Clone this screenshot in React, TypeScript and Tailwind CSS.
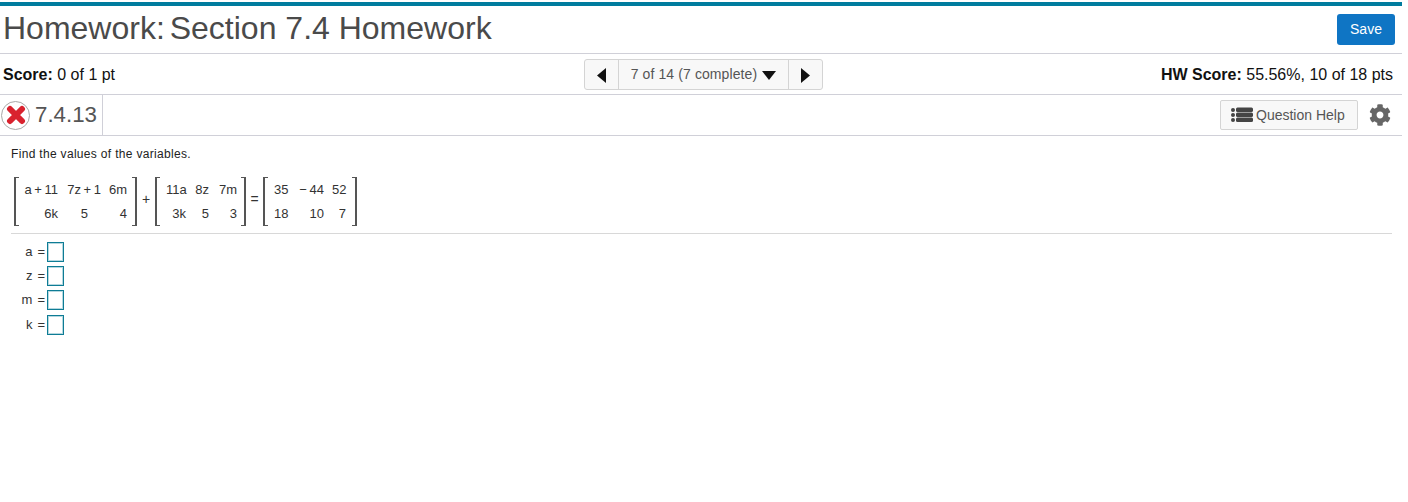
import { FaCog } from 'react-icons/fa'

function Bracket({ side }: { side: 'left' | 'right' }) {
  return (
    <div
      className={
        side === 'left'
          ? 'w-[5px] h-[49px] border-l-2 border-y border-[#555]'
          : 'w-[5px] h-[49px] border-r-2 border-y border-[#555]'
      }
    />
  )
}

function Matrix({ rows, gridClass }: { rows: string[][]; gridClass: string }) {
  return (
    <div className="flex items-center">
      <Bracket side="left" />
      <div className={gridClass}>
        {rows.flat().map((cell, i) => (
          <span key={i} className="text-right leading-[14px] whitespace-pre [word-spacing:-1px]">
            {cell}
          </span>
        ))}
      </div>
      <Bracket side="right" />
    </div>
  )
}

function Answer({ label }: { label: string }) {
  return (
    <div className="flex items-center justify-end w-[64px] h-[24px]">
      <span className="text-[13px] text-[#333]">{label}</span>
      <span className="text-[13px] text-[#333] ml-[5px] mr-[2px]">=</span>
      <div className="w-[17px] h-[20px] border border-[#0e7c95] shadow-[inset_0_0_0_1px_#b5d8e0]" />
    </div>
  )
}

function TriangleLeft() {
  return (
    <svg width="9" height="15" viewBox="0 0 9 15" className="mt-[1px]">
      <path d="M9 0V15L0 7.500Z" fill="#111" />
    </svg>
  )
}

function TriangleRight() {
  return (
    <svg width="9" height="15" viewBox="0 0 9 15" className="mt-[1px]">
      <path d="M0 0V15L9 7.500Z" fill="#111" />
    </svg>
  )
}

export default function App() {
  return (
    <div className="w-[1402px] h-[502px] bg-white font-['Liberation_Sans',Arial,sans-serif] overflow-hidden">
      <div className="mt-[2px] h-[4px] bg-[#007c9e]" />

      {/* title */}
      <div className="flex items-center justify-between h-[48px] border-b border-[#d0d0d8] pl-[3px] pr-[7px]">
        <h1 className="text-[32px] leading-none text-[#4a4a4a] mt-[-3px]">
          Homework:<span className="-ml-[4px]"> Section 7.4 Homework</span>
        </h1>
        <button className="w-[58px] h-[31px] bg-[#0f75c4] rounded-[3px] text-white text-[14px]">Save</button>
      </div>

      {/* score row */}
      <div className="relative flex items-center justify-between h-[41px] border-b border-[#d0d0d8] pt-[2px] pl-[3px] pr-[9px] text-[16px] text-[#111]">
        <div>
          <b>Score:</b> 0 of 1 pt
        </div>
        <div className="absolute left-[584px] top-[5px] flex h-[31px] w-[239px] border border-[#d4d4d4] rounded-[3px] bg-[#f8f8f8]">
          <div className="w-[34px] flex items-center justify-center border-r border-[#d4d4d4]">
            <TriangleLeft />
          </div>
          <div className="flex-1 flex items-center justify-center gap-[5px] text-[14px] text-[#555] tracking-[0.1px] border-r border-[#d4d4d4]">
            7 of 14 (7 complete)
            <svg width="14" height="9" viewBox="0 0 14 9" className="mt-[1px]">
              <path d="M0 0H14L7 9Z" fill="#111" />
            </svg>
          </div>
          <div className="w-[33px] flex items-center justify-center">
            <TriangleRight />
          </div>
        </div>
        <div>
          <b>HW Score:</b> 55.56%, 10 of 18 pts
        </div>
      </div>

      {/* question row */}
      <div className="flex items-center justify-between h-[41px] border-b border-[#d0d0d8] pr-[11px]">
        <div className="flex items-center h-full">
          <div className="ml-[1px] w-[29px] h-[29px] rounded-full border border-[#a8a8a8] flex items-center justify-center">
            <svg width="20" height="20" viewBox="0 0 20 20">
              <path d="M4 4L16 16M16 4L4 16" stroke="#d9222e" strokeWidth="6" strokeLinecap="round" />
            </svg>
          </div>
          <span className="ml-[5px] text-[22.300px] text-[#555] pr-[5px] h-full flex items-center border-r border-[#d0d0d8]">7.4.13</span>
        </div>
        <div className="flex items-center gap-[11px] -mt-[1px]">
          <div className="flex items-center w-[138px] h-[30px] pl-[10px] pt-[1px] gap-[3px] border border-[#d4d4d4] rounded-[2px] bg-[#f8f8f8] text-[14px] text-[#555]">
            <svg width="22" height="16" viewBox="0 0 22 16" fill="#444">
              <circle cx="2" cy="3" r="2" />
              <circle cx="2" cy="8" r="2" />
              <circle cx="2" cy="13" r="2" />
              <rect x="5" y="0.500" width="17" height="4.500" rx="1.500" />
              <rect x="5" y="5.500" width="17" height="4.500" rx="1.500" />
              <rect x="5" y="10.500" width="17" height="4.500" rx="1.500" />
            </svg>
            Question Help
          </div>
          <FaCog className="w-[22px] h-[22px] text-[#666]" />
        </div>
      </div>

      {/* question body */}
      <div className="pl-[11px] pt-[11px]">
        <p className="text-[12px] leading-[14px] text-[#222] tracking-[0.32px]">Find the values of the variables.</p>
        <div className="flex items-center mt-[16px] ml-[3px] text-[13px] text-[#333]">
          <Matrix
            gridClass="grid grid-cols-[34px_35px_18px] gap-x-[8px] gap-y-[10px] pl-[5px] pr-[5px]"
            rows={[
              ['a + 11', '7z + 1', '6m'],
              ['6k', '5\u00a0\u00a0\u00a0\u00a0\u00a0', '4'],
            ]}
          />
          <span className="w-[18px] text-center text-[14px] pb-[4px]">+</span>
          <Matrix
            gridClass="grid grid-cols-[20px_15px_20px] gap-x-[8px] gap-y-[10px] pl-[6px] pr-[4px]"
            rows={[
              ['11a', '8z', '7m'],
              ['3k', '5', '3'],
            ]}
          />
          <span className="w-[17px] text-center text-[14px] pb-[4px]">=</span>
          <Matrix
            gridClass="grid grid-cols-[14px_28px_14px] gap-x-[8px] gap-y-[10px] pl-[6px] pr-[6px]"
            rows={[
              ['35', '\u2212 44', '52'],
              ['18', '10', '7'],
            ]}
          />
        </div>
        <div className="mt-[7px] mr-[10px] border-t border-[#d8d8d8]" />
        <div className="mt-[6px] -ml-[11px] flex flex-col">
          <Answer label="a" />
          <Answer label="z" />
          <Answer label="m" />
          <div className="mt-[1px]">
            <Answer label="k" />
          </div>
        </div>
      </div>
    </div>
  )
}
